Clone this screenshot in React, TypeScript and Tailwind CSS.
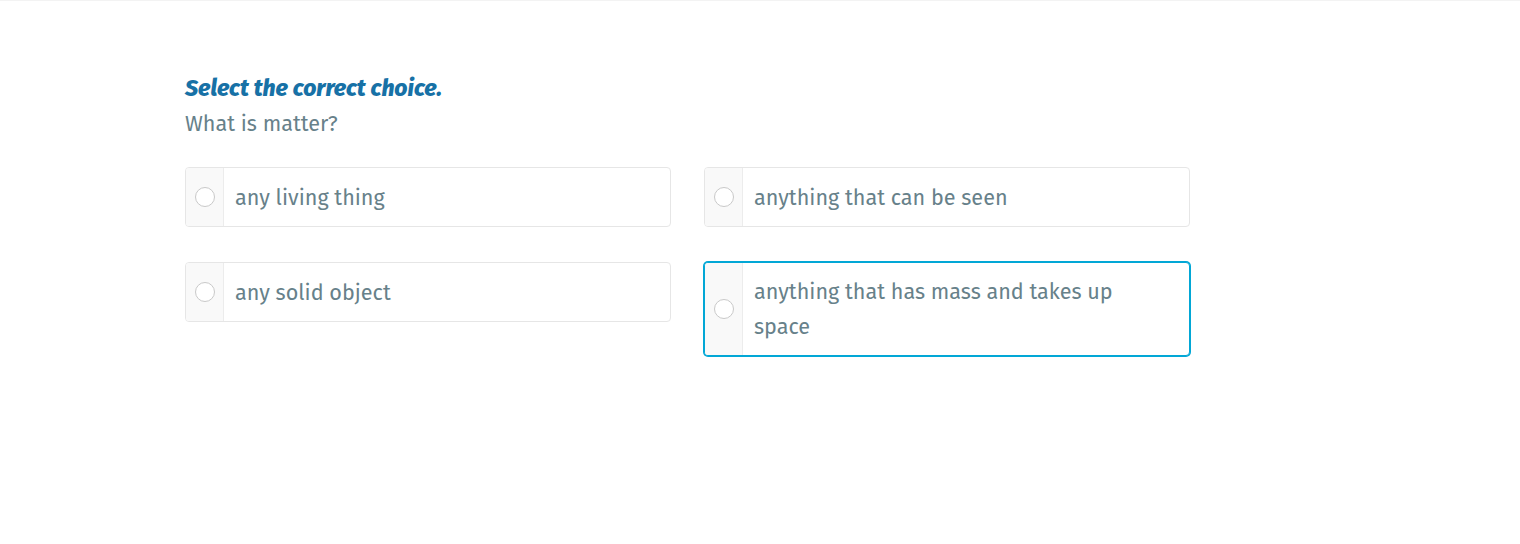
const choices = [
  { id: 1, text: "any living thing" },
  { id: 2, text: "anything that can be seen" },
  { id: 3, text: "any solid object" },
  { id: 4, text: "anything that has mass and takes up space", selected: true },
];

export default function App() {
  return (
    <div className="min-h-screen bg-white border-t border-[#f3f3f3] font-['Fira_Sans','Open_Sans',sans-serif]">
      <div className="pl-[185px] pt-[73px]">
        {/* Prompt */}
        <h2 className="text-[23px] leading-[28px] font-extrabold italic text-[#1771a6]">Select the correct choice.</h2>
        <p className="mt-[8px] text-[21.6px] leading-[28px] text-[#67818a]">What is matter?</p>

        {/* Choices */}
        <div className="mt-[29px] grid grid-cols-[486px_486px] gap-x-[33px] gap-y-[35px] items-start">
          {choices.map((c) => (
            <div
              key={c.id}
              className={`flex min-h-[60px] rounded-[4px] border bg-white overflow-hidden ${
                c.selected ? "border-[#02a7d6] ring-1 ring-[#02a7d6]" : "border-[#e6e6e6]"
              }`}
            >
              <div className="w-[38px] shrink-0 bg-[#f9f9f9] border-r border-[#ececec] flex items-center justify-center">
                <span className="block w-[20px] h-[20px] rounded-full border border-[#c9c9c9] bg-white" />
              </div>
              <div className="flex items-center pl-[11px] pr-[40px] pt-[12px] pb-[10px] text-[21.6px] leading-[35px] text-[#67818a]">
                {c.text}
              </div>
            </div>
          ))}
        </div>
      </div>
    </div>
  );
}
